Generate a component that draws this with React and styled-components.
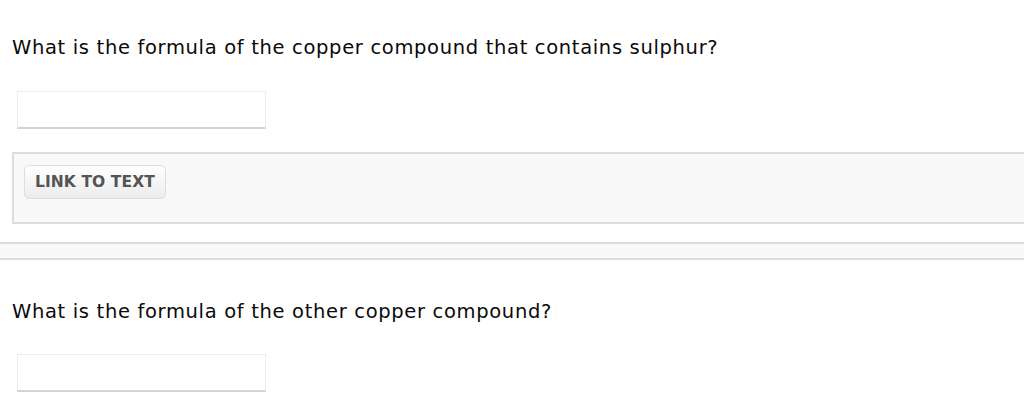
import React from "react";
import styled, { createGlobalStyle } from "styled-components";

const Global = createGlobalStyle`
  html, body { margin: 0; padding: 0; background: #fff; }
  body { font-family: "DejaVu Sans", Verdana, sans-serif; overflow: hidden; }
`;

const Page = styled.div`
  width: 1024px;
  height: 404px;
  overflow: hidden;
  display: flex;
  flex-direction: column;
`;

const Question = styled.p`
  margin: ${(p) => p.$top}px 0 0 12px;
  font-size: 19.5px;
  line-height: 22px;
  letter-spacing: 0.67px;
  color: #0a0a0a;
`;

const Answer = styled.input`
  box-sizing: border-box;
  margin: ${(p) => p.$top}px 0 0 17px;
  width: 249px;
  height: 38px;
  border: 1px solid #ececec;
  border-bottom: 2px solid #d4d4d4;
  background: #fff;
  outline: none;
`;

const Panel = styled.div`
  box-sizing: border-box;
  margin: 23px -20px 0 12px;
  height: 72px;
  border: 2px solid #dcdcdc;
  background: #f9f9f9;
  padding: 11px 0 0 10px;
  display: flex;
  align-items: flex-start;
`;

const LinkButton = styled.button`
  box-sizing: border-box;
  height: 34px;
  padding: 0 10px 0 10px;
  border: 1.5px solid #dedede;
  border-radius: 5px;
  background: linear-gradient(#ffffff, #ececec);
  font-family: "DejaVu Sans", Verdana, sans-serif;
  font-weight: bold;
  font-size: 15.5px;
  letter-spacing: 0.08px;
  color: #555;
`;

const Band = styled.div`
  margin-top: 18px;
  height: 14px;
  border-top: 2px solid #dcdcdc;
  border-bottom: 2px solid #dcdcdc;
  background: #f9f9f9;
`;

export default function App() {
  return (
    <Page>
      <Global />
      <Question $top={37}>What is the formula of the copper compound that contains sulphur?</Question>
      <Answer $top={32} type="text" />
      <Panel>
        <LinkButton>LINK TO TEXT</LinkButton>
      </Panel>
      <Band />
      <Question $top={41}>What is the formula of the other copper compound?</Question>
      <Answer $top={31} type="text" />
    </Page>
  );
}
